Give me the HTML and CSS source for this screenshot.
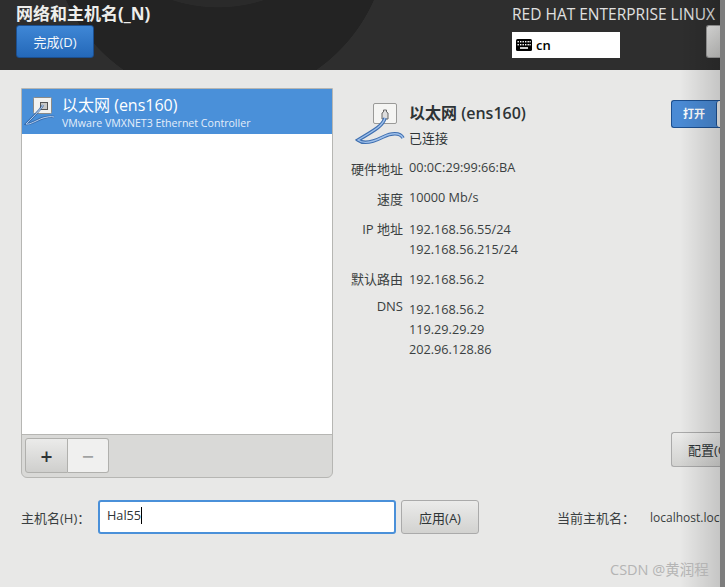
FILE: index.html
```html
<!DOCTYPE html>
<html lang="zh-CN">
<head>
<meta charset="utf-8">
<title>网络和主机名</title>
<link rel="stylesheet" href="styles.css">
</head>
<body>
<div class="page">
  <header class="top">
    <div class="top-left">
      <h1 class="title">网络和主机名(_N)</h1>
      <button class="btn-done">完成(D)</button>
    </div>
    <div class="top-right">
      <div class="brand">RED HAT ENTERPRISE LINUX</div>
      <div class="top-right-row">
        <div class="kbd">
          <svg class="kbd-icon" width="16" height="12" viewBox="0 0 16 12">
            <rect width="16" height="12" rx="1.5" fill="#000"/>
            <g fill="#fff">
              <rect x="1.5" y="2" width="1.4" height="1.4"/><rect x="4" y="2" width="1.4" height="1.4"/><rect x="6.5" y="2" width="1.4" height="1.4"/><rect x="9" y="2" width="1.4" height="1.4"/><rect x="11.5" y="2" width="1.4" height="1.4"/><rect x="13.5" y="2" width="1.2" height="1.4"/>
              <rect x="1.5" y="5" width="1.4" height="1.4"/><rect x="4" y="5" width="1.4" height="1.4"/><rect x="6.5" y="5" width="1.4" height="1.4"/><rect x="9" y="5" width="1.4" height="1.4"/><rect x="11.5" y="5" width="1.4" height="1.4"/><rect x="13.5" y="5" width="1.2" height="1.4"/>
              <rect x="4" y="8.2" width="8" height="1.6"/>
            </g>
          </svg>
          <span>cn</span>
        </div>
        <button class="btn-help"></button>
      </div>
    </div>
  </header>

  <main class="body">
    <div class="columns">
      <section class="list-panel">
        <div class="list">
          <div class="list-row">
            <svg class="list-icon" width="32" height="32" viewBox="0 0 32 32">
              <rect x="9.5" y="2.5" width="18" height="16" rx="1" fill="#f2f2f0" stroke="#8a8a88"/>
              <rect x="16.5" y="7.5" width="7" height="7" fill="#c9c9c7" stroke="#555"/>
              <path d="M19 10C17 14 13 18 2 29C6 30 13 25 19 23C23 22 27 21 30 22" fill="none" stroke="#2f5f9f" stroke-opacity=".75" stroke-width="2.4"/>
              <path d="M19 10C17 14 13 18 2 29C6 30 13 25 19 23C23 22 27 21 30 22" fill="none" stroke="#b4cdec" stroke-width="1"/>
            </svg>
            <div class="list-text">
              <div class="list-name">以太网 (ens160)</div>
              <div class="list-sub">VMware VMXNET3 Ethernet Controller</div>
            </div>
          </div>
        </div>
        <div class="toolbar">
          <button class="tool tool-add">+</button>
          <button class="tool tool-remove">−</button>
        </div>
      </section>

      <section class="detail">
        <div class="detail-head">
          <svg class="detail-icon" width="50" height="46" viewBox="0 0 50 46">
            <rect x="18.5" y="2.5" width="23" height="20" rx="1.5" fill="#f5f5f3" stroke="#9a9a98"/>
            <path d="M27 18V12l1.5-1V9h3v2l1.5 1v6z" fill="#ddd" stroke="#666"/>
            <path d="M30 17C28 24 22 28 3 39C8 43 18 41 28 36C36 32 45 31 48 37" fill="none" stroke="#3f6fb0" stroke-width="3.6"/>
            <path d="M30 17C28 24 22 28 3 39C8 43 18 41 28 36C36 32 45 31 48 37" fill="none" stroke="#9fc0ea" stroke-width="1.4"/>
          </svg>
          <div class="detail-heading">
            <div class="detail-name">以太网 (ens160)</div>
            <div class="detail-status">已连接</div>
          </div>
          <div class="switch"><span class="switch-on">打开</span><span class="switch-knob"></span></div>
        </div>
        <dl class="props">
          <dt class="prop-label">硬件地址</dt><dd class="prop-value prop-value-up">00:0C:29:99:66:BA</dd>
          <dt class="prop-label">速度</dt><dd class="prop-value prop-value-up">10000 Mb/s</dd>
          <dt class="prop-label">IP 地址</dt><dd class="prop-value">192.168.56.55/24<br>192.168.56.215/24</dd>
          <dt class="prop-label">默认路由</dt><dd class="prop-value">192.168.56.2</dd>
          <dt class="prop-label prop-label-dns">DNS</dt><dd class="prop-value">192.168.56.2<br>119.29.29.29<br>202.96.128.86</dd>
        </dl>
        <div class="config-row"><button class="btn btn-config">配置(O)...</button></div>
      </section>
    </div>

    <div class="host-row">
      <label class="host-label">主机名(H)：</label>
      <div class="host-input">Hal55<span class="caret"></span></div>
      <button class="btn btn-apply">应用(A)</button>
      <span class="current-label">当前主机名：</span>
      <span class="current-value">localhost.localdomain</span>
    </div>
  </main>
  <div class="shade"></div>
  <div class="watermark">CSDN @黄润程</div>
</div>
</body>
</html>
```

FILE: styles.css
```css
* { box-sizing: border-box; }
html, body { margin: 0; height: 100%; }
body { background: #e8e8e7; overflow: hidden; }
.page {
  position: relative;
  width: 725px;
  height: 587px;
  border-right: 5px solid #7d7d7d;
  overflow: hidden;
  display: flex;
  flex-direction: column;
  font-family: "Open Sans", "Noto Sans CJK SC", sans-serif;
  color: #2e3436;
  background: #e8e8e7;
}
button { font-family: inherit; padding: 0; margin: 0; }

.top {
  height: 70px;
  flex: none;
  display: flex;
  justify-content: space-between;
  padding-left: 16px;
  background:
    radial-gradient(circle at 218px -141px, #2a2a2a 148px, transparent 148.6px),
    radial-gradient(circle at 220px -68px, #232323 168px, transparent 168.6px),
    #2e2e2e;
}
.title {
  margin: 0;
  height: 25px;
  font-size: 17px;
  line-height: 27px;
  font-weight: 700;
  color: #eeeeec;
  white-space: nowrap;
}
.btn-done {
  display: block;
  width: 78px;
  height: 33px;
  border: 1px solid #1c4f8f;
  border-radius: 3px;
  background: linear-gradient(#3f87d6, #2468b8);
  color: #f4f7fb;
  font-size: 13px;
}
.top-right { width: 208px; }
.brand {
  height: 25px;
  font-size: 15.5px;
  line-height: 28px;
  color: #e0e0e0;
  white-space: nowrap;
}
.top-right-row { display: flex; justify-content: space-between; align-items: flex-start; }
.kbd {
  margin-top: 7px;
  width: 108px;
  height: 26px;
  background: #fff;
  display: flex;
  align-items: center;
  gap: 4px;
  padding: 0 0 1px 4px;
  color: #000;
  font-size: 13px;
  font-weight: 600;
}
.btn-help {
  width: 14px;
  height: 33px;
  border: 1px solid #999;
  border-right: 0;
  border-radius: 3px 0 0 3px;
  background: linear-gradient(#e6e6e5, #c6c6c4);
}

.body { flex: 1; padding: 18px 0 0 21px; min-height: 0; }
.columns { display: flex; height: 390px; }
.list-panel {
  width: 312px;
  height: 390px;
  flex: none;
  display: flex;
  flex-direction: column;
  border: 1px solid #b6b6b3;
  border-radius: 0 0 6px 6px;
  background: #d9d9d7;
}
.list { flex: 1; background: #fff; border-bottom: 1px solid #b6b6b3; }
.list-row {
  height: 45px;
  background: #4a90d9;
  color: #fff;
  display: flex;
  padding: 6px 0 0 2px;
  gap: 6px;
}
.list-icon { flex: none; }
.list-name { font-size: 16px; line-height: 21px; white-space: nowrap; }
.list-sub { font-size: 10.6px; line-height: 14px; color: #e4eefa; white-space: nowrap; }
.toolbar { height: 42px; flex: none; padding: 3px 0 0 3px; display: flex; }
.tool {
  height: 35px;
  border: 1px solid #b0b0ad;
  font-size: 21px;
  line-height: 30px;
  font-weight: 600;
}
.tool-add {
  width: 43px;
  border-radius: 3px 0 0 3px;
  background: linear-gradient(#ebebea, #cfcfcd);
  color: #2e3436;
}
.tool-remove {
  width: 41px;
  border-left: 0;
  border-radius: 0 3px 3px 0;
  background: #f0f0ef;
  color: #a0a2a2;
}

.detail { flex: 1; min-width: 0; padding: 12px 0 0 22px; display: flex; flex-direction: column; position: relative; }
.detail-head { display: flex; height: 48px; }
.detail-icon { flex: none; margin-top: 1px; }
.detail-heading { margin-left: 4px; }
.detail-name { font-size: 16px; font-weight: 600; line-height: 26px; white-space: nowrap; }
.detail-status { font-size: 13px; line-height: 24px; }
.switch {
  margin-left: auto;
  width: 49px;
  height: 28px;
  display: flex;
  border: 1px solid #1c4f8f;
  border-right: 0;
  border-radius: 3px 0 0 3px;
  background: #4a8ad4;
  flex: none;
}
.switch-on {
  width: 44px;
  text-align: center;
  color: #fff;
  font-size: 11px;
  font-weight: 700;
  line-height: 25px;
}
.switch-knob { flex: 1; background: #ececeb; border-left: 1px solid #1c4f8f; border-radius: 3px 0 0 3px; }
.props {
  margin: 11px 0 0 -4px;
  display: grid;
  grid-template-columns: 52px 1fr;
  column-gap: 6px;
  row-gap: 10px;
  font-size: 13px;
  line-height: 20px;
}
.prop-label { text-align: right; color: #3a3f41; white-space: nowrap; }
.prop-value { margin: 0; color: #3a3f41; white-space: nowrap; font-size: 12.7px; }
.prop-value-up { margin-top: -2px; }
.prop-label-dns { margin-top: -3px; }
.config-row { position: absolute; right: 0; top: 344px; }
.btn {
  border: 1px solid #aaa;
  border-radius: 3px;
  background: linear-gradient(#ebebea, #d2d2d0);
  color: #2e3436;
  font-size: 13px;
  white-space: nowrap;
}
.btn-config { width: 49px; height: 35px; border-right: 0; border-radius: 3px 0 0 3px; text-align: left; padding-left: 16px; overflow: hidden; }

.host-row { display: flex; align-items: center; height: 34px; margin-top: 22px; font-size: 13px; white-space: nowrap; }
.host-label { width: 77px; flex: none; color: #3a3f41; }
.host-input {
  width: 298px;
  height: 34px;
  flex: none;
  border: 2px solid #4a90d9;
  border-radius: 3px;
  background: #fff;
  padding-left: 7px;
  line-height: 26px;
  font-size: 12.7px;
}
.caret { display: inline-block; width: 1px; height: 17px; background: #000; vertical-align: -4px; }
.btn-apply { width: 78px; height: 34px; margin-left: 5px; flex: none; }
.current-label { margin-left: 78px; width: 93px; flex: none; color: #3a3f41; }
.current-value { font-size: 12px; color: #3a3f41; }

.shade {
  position: absolute;
  top: 0;
  right: 0;
  bottom: 0;
  width: 40px;
  background: linear-gradient(to right, rgba(0,0,0,0), rgba(0,0,0,.15));
  pointer-events: none;
}
.watermark {
  position: absolute;
  left: 610px;
  top: 560px;
  font-size: 14.5px;
  line-height: 20px;
  color: #b4b4b4;
  white-space: nowrap;
}
```
